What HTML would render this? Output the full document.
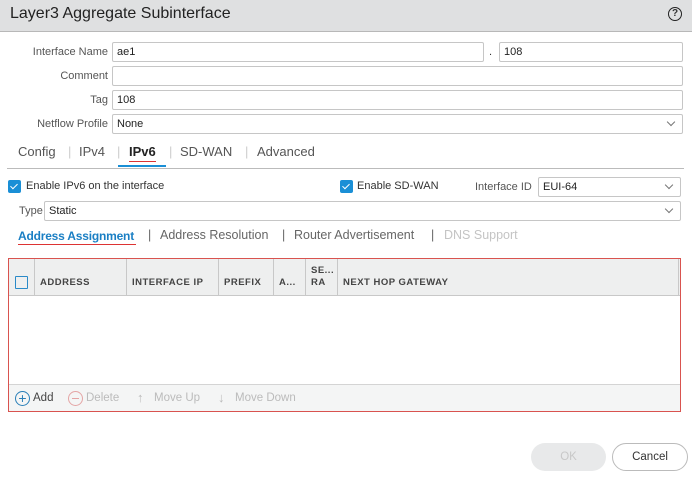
<!DOCTYPE html><html><head><style>
*{box-sizing:border-box;margin:0;padding:0}
body{width:692px;height:480px;background:#fff;font-family:"Liberation Sans",sans-serif;position:relative;overflow:hidden;color:#333}
.a{position:absolute}
.hdr{left:0;top:0;width:692px;height:32px;background:#dfe0e1;border-bottom:1px solid #b8b8b8}
.lbl{font-size:11px;color:#555;text-align:right;width:106px;left:2px}
.in{border:1px solid #c6c6c6;border-radius:2px;height:20px;font-size:11px;color:#222;padding:3px 4px;background:#fff}
.tab{font-size:13px;color:#555;top:144px}
.sep{color:#ccc}
.chk{width:13px;height:13px;background:#1a8fd6;border-radius:2px}
.chk:after{content:"";position:absolute;left:4px;top:2px;width:3px;height:6px;border:solid #fff;border-width:0 1px 1px 0;transform:rotate(45deg)}
.chev{position:absolute;right:8px;top:4px;width:6px;height:6px;border:solid #777;border-width:0 1px 1px 0;transform:rotate(45deg)}
.st{font-size:12.5px;top:228px;color:#666}
.th{font-size:9.5px;font-weight:bold;color:#444;letter-spacing:.5px;top:277px}
.vl{top:259px;width:1px;height:37px;background:#c8c8c8}
.ft{font-size:11.5px;top:392px;color:#bbb}
</style></head><body>
<div class="a hdr"></div>
<div class="a" style="left:10px;top:5px;font-size:16px;color:#222">Layer3 Aggregate Subinterface</div>
<div class="a" style="left:668px;top:7px;width:14px;height:14px;border:1.3px solid #222;border-radius:50%;font-size:10px;font-weight:bold;text-align:center;line-height:12px">?</div>

<div class="a lbl" style="top:46px">Interface Name</div>
<div class="a in" style="left:112px;top:42px;width:372px">ae1</div>
<div class="a" style="left:489px;top:46px;font-size:11px">.</div>
<div class="a in" style="left:499px;top:42px;width:184px">108</div>
<div class="a lbl" style="top:70px">Comment</div>
<div class="a in" style="left:112px;top:66px;width:571px"></div>
<div class="a lbl" style="top:94px">Tag</div>
<div class="a in" style="left:112px;top:90px;width:571px">108</div>
<div class="a lbl" style="top:118px">Netflow Profile</div>
<div class="a in" style="left:112px;top:114px;width:571px">None<span class="chev"></span></div>

<div class="a tab" style="left:18px">Config</div>
<div class="a tab sep" style="left:68px">|</div>
<div class="a tab" style="left:79px">IPv4</div>
<div class="a tab sep" style="left:117px">|</div>
<div class="a tab" style="left:129px;color:#222;font-weight:bold">IPv6</div>
<div class="a" style="left:129px;top:161px;width:27px;height:1px;background:#d33"></div>
<div class="a" style="left:118px;top:165px;width:48px;height:2px;background:#1a8fd6"></div>
<div class="a tab sep" style="left:169px">|</div>
<div class="a tab" style="left:180px">SD-WAN</div>
<div class="a tab sep" style="left:245px">|</div>
<div class="a tab" style="left:257px">Advanced</div>
<div class="a" style="left:7px;top:168px;width:677px;height:1px;background:#bbb"></div>

<div class="a chk" style="left:8px;top:180px"></div>
<div class="a" style="left:26px;top:180px;font-size:11px;color:#333">Enable IPv6 on the interface</div>
<div class="a chk" style="left:340px;top:180px"></div>
<div class="a" style="left:357px;top:180px;font-size:11px;color:#333">Enable SD-WAN</div>
<div class="a" style="left:475px;top:181px;font-size:11px;color:#555">Interface ID</div>
<div class="a in" style="left:538px;top:177px;width:143px">EUI-64<span class="chev"></span></div>
<div class="a" style="left:19px;top:205px;font-size:11px;color:#555">Type</div>
<div class="a in" style="left:44px;top:201px;width:637px">Static<span class="chev"></span></div>

<div class="a st" style="left:18px;color:#1a7fc4;font-weight:bold;font-size:12px;top:229px;letter-spacing:-0.2px">Address Assignment</div>
<div class="a" style="left:18px;top:244px;width:118px;height:1px;background:#d33"></div>
<div class="a st sep" style="left:148px">|</div>
<div class="a st" style="left:160px">Address Resolution</div>
<div class="a st sep" style="left:282px">|</div>
<div class="a st" style="left:294px">Router Advertisement</div>
<div class="a st sep" style="left:431px">|</div>
<div class="a st" style="left:444px;color:#c4c4c4">DNS Support</div>

<div class="a" style="left:8px;top:258px;width:673px;height:154px;border:1px solid #d9534f;background:#fff"></div>
<div class="a" style="left:9px;top:259px;width:671px;height:37px;background:#eeefef;border-bottom:1px solid #c8c8c8"></div>
<div class="a" style="left:9px;top:384px;width:671px;height:27px;background:#f4f5f5;border-top:1px solid #d4d4d4"></div>
<div class="a" style="left:15px;top:276px;width:13px;height:13px;border:1.5px solid #2a8ac8;border-radius:1px"></div>
<div class="a vl" style="left:34px"></div><div class="a vl" style="left:126px"></div><div class="a vl" style="left:218px"></div><div class="a vl" style="left:273px"></div><div class="a vl" style="left:305px"></div><div class="a vl" style="left:337px"></div><div class="a vl" style="left:678px"></div>
<div class="a th" style="left:40px">ADDRESS</div>
<div class="a th" style="left:132px">INTERFACE IP</div>
<div class="a th" style="left:224px">PREFIX</div>
<div class="a th" style="left:279px">A...</div>
<div class="a th" style="left:311px;top:265px;line-height:12px">SE...<br>RA</div>
<div class="a th" style="left:343px">NEXT HOP GATEWAY</div>

<div class="a" style="left:15px;top:391px;width:15px;height:15px;border:1px solid #2a7fb8;border-radius:50%;color:#2a7fb8;font-size:14px;line-height:12px;text-align:center">+</div>
<div class="a ft" style="left:33px;color:#444">Add</div>
<div class="a" style="left:68px;top:391px;width:15px;height:15px;border:1px solid #e4a5a5;border-radius:50%"><div class="a" style="left:3px;top:6px;width:7px;height:1px;background:#e4a5a5"></div></div>
<div class="a ft" style="left:86px">Delete</div>
<div class="a ft" style="left:137px;font-size:13px;top:390px">↑</div>
<div class="a ft" style="left:154px">Move Up</div>
<div class="a ft" style="left:218px;font-size:13px;top:390px">↓</div>
<div class="a ft" style="left:235px">Move Down</div>

<div class="a" style="left:531px;top:443px;width:75px;height:28px;border-radius:14px;background:#e8e9ea;color:#c8c8c8;font-size:11.5px;text-align:center;line-height:28px">OK</div>
<div class="a" style="left:612px;top:443px;width:76px;height:28px;border-radius:14px;border:1px solid #bbb;color:#333;font-size:11.5px;text-align:center;line-height:26px">Cancel</div>
</body></html>
